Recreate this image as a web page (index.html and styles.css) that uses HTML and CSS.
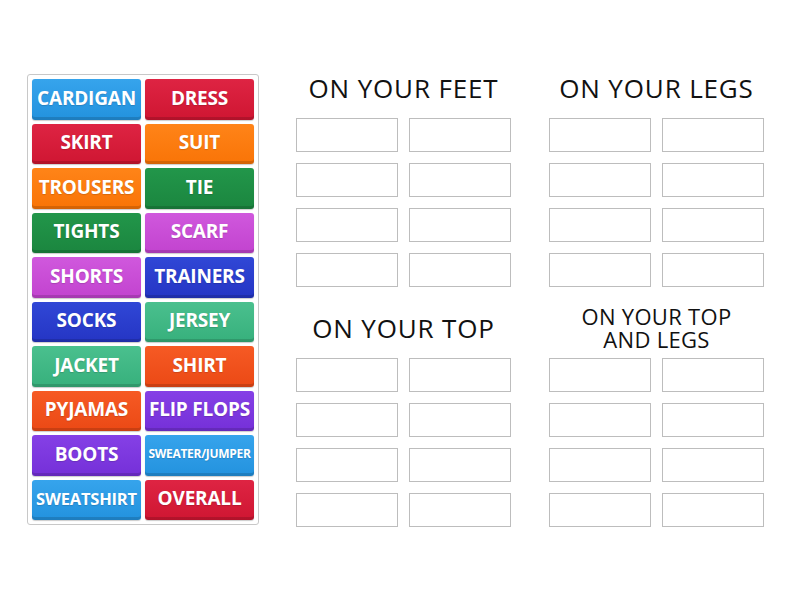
FILE: index.html
```html
<!DOCTYPE html>
<html lang="en">
<head>
<meta charset="utf-8">
<title>Clothes group sort</title>
<link rel="stylesheet" href="styles.css">
</head>
<body>
<div class="page">
  <div class="bank">
    <div class="tile blue">CARDIGAN</div>
    <div class="tile red">DRESS</div>
    <div class="tile red">SKIRT</div>
    <div class="tile orange">SUIT</div>
    <div class="tile orange">TROUSERS</div>
    <div class="tile green">TIE</div>
    <div class="tile green">TIGHTS</div>
    <div class="tile magenta">SCARF</div>
    <div class="tile magenta">SHORTS</div>
    <div class="tile royal">TRAINERS</div>
    <div class="tile royal">SOCKS</div>
    <div class="tile mint">JERSEY</div>
    <div class="tile mint">JACKET</div>
    <div class="tile flame">SHIRT</div>
    <div class="tile flame">PYJAMAS</div>
    <div class="tile purple">FLIP FLOPS</div>
    <div class="tile purple">BOOTS</div>
    <div class="tile blue fit-xs">SWEATER/JUMPER</div>
    <div class="tile blue fit-md">SWEATSHIRT</div>
    <div class="tile red">OVERALL</div>
  </div>
  <div class="groups">
    <section class="group">
      <h2 class="title">ON YOUR FEET</h2>
      <div class="slots">
        <div class="slot"></div><div class="slot"></div>
        <div class="slot"></div><div class="slot"></div>
        <div class="slot"></div><div class="slot"></div>
        <div class="slot"></div><div class="slot"></div>
      </div>
    </section>
    <section class="group">
      <h2 class="title">ON YOUR LEGS</h2>
      <div class="slots">
        <div class="slot"></div><div class="slot"></div>
        <div class="slot"></div><div class="slot"></div>
        <div class="slot"></div><div class="slot"></div>
        <div class="slot"></div><div class="slot"></div>
      </div>
    </section>
    <section class="group">
      <h2 class="title">ON YOUR TOP</h2>
      <div class="slots">
        <div class="slot"></div><div class="slot"></div>
        <div class="slot"></div><div class="slot"></div>
        <div class="slot"></div><div class="slot"></div>
        <div class="slot"></div><div class="slot"></div>
      </div>
    </section>
    <section class="group">
      <h2 class="title small"><span class="line">ON YOUR TOP</span><span class="line">AND LEGS</span></h2>
      <div class="slots">
        <div class="slot"></div><div class="slot"></div>
        <div class="slot"></div><div class="slot"></div>
        <div class="slot"></div><div class="slot"></div>
        <div class="slot"></div><div class="slot"></div>
      </div>
    </section>
  </div>
</div>
</body>
</html>
```

FILE: styles.css
```css
html, body {
  margin: 0;
  padding: 0;
  background: #ffffff;
}

body {
  width: 800px;
  height: 600px;
  overflow: hidden;
  font-family: "Open Sans", "Liberation Sans", sans-serif;
}

.page {
  display: flex;
  align-items: flex-start;
  padding-left: 27px;
}

.bank {
  margin-top: 74px;
  width: 222px;
  height: 441px;
  padding: 4px;
  border: 1px solid #c8c8c8;
  border-radius: 3px;
  display: grid;
  grid-template-columns: 109px 109px;
  grid-auto-rows: 40.5px;
  column-gap: 4px;
  row-gap: 4px;
}

.tile {
  display: flex;
  align-items: center;
  justify-content: center;
  padding-bottom: 3px;
  box-sizing: border-box;
  border-radius: 3px;
  color: #ffffff;
  font-weight: 700;
  font-size: 19px;
  letter-spacing: -0.2px;
  white-space: nowrap;
  text-shadow: 0 1px 1px rgba(0, 0, 0, 0.15);
  box-shadow: inset 0 -3px 0 rgba(0, 0, 0, 0.14), 0 1px 1px rgba(0, 0, 0, 0.2);
}

.fit-md { font-size: 16.5px; }
.fit-xs { font-size: 12px; letter-spacing: -0.3px; }

.blue    { background: linear-gradient(#36a4ec, #2392de); }
.red     { background: linear-gradient(#de2443, #cf1632); }
.orange  { background: linear-gradient(#ff8418, #f97407); }
.green   { background: linear-gradient(#22964a, #1b863f); }
.magenta { background: linear-gradient(#d058dd, #c243cf); }
.royal   { background: linear-gradient(#3047d6, #2535c4); }
.mint    { background: linear-gradient(#4ac08e, #37b07c); }
.flame   { background: linear-gradient(#f65a24, #eb4915); }
.purple  { background: linear-gradient(#8540e6, #7530d8); }

.groups {
  margin-top: 66px;
  margin-left: 37px;
  display: grid;
  grid-template-columns: 215px 215px;
  column-gap: 38px;
  row-gap: 19px;
}

.group {
  display: flex;
  flex-direction: column;
  gap: 8px;
}

.title {
  margin: 0;
  height: 44px;
  display: flex;
  flex-direction: column;
  align-items: center;
  justify-content: center;
  text-align: center;
  font-weight: 400;
  font-size: 26px;
  letter-spacing: 0.85px;
  color: #111111;
  line-height: 1;
}

.title.small {
  font-size: 22px;
  letter-spacing: 0.3px;
  line-height: 23px;
}

.line {
  display: block;
}

.slots {
  display: grid;
  grid-template-columns: 102px 102px;
  grid-auto-rows: 34px;
  column-gap: 11px;
  row-gap: 11px;
}

.slot {
  box-sizing: border-box;
  border: 1px solid #bdbdbd;
  background: #ffffff;
}
```
